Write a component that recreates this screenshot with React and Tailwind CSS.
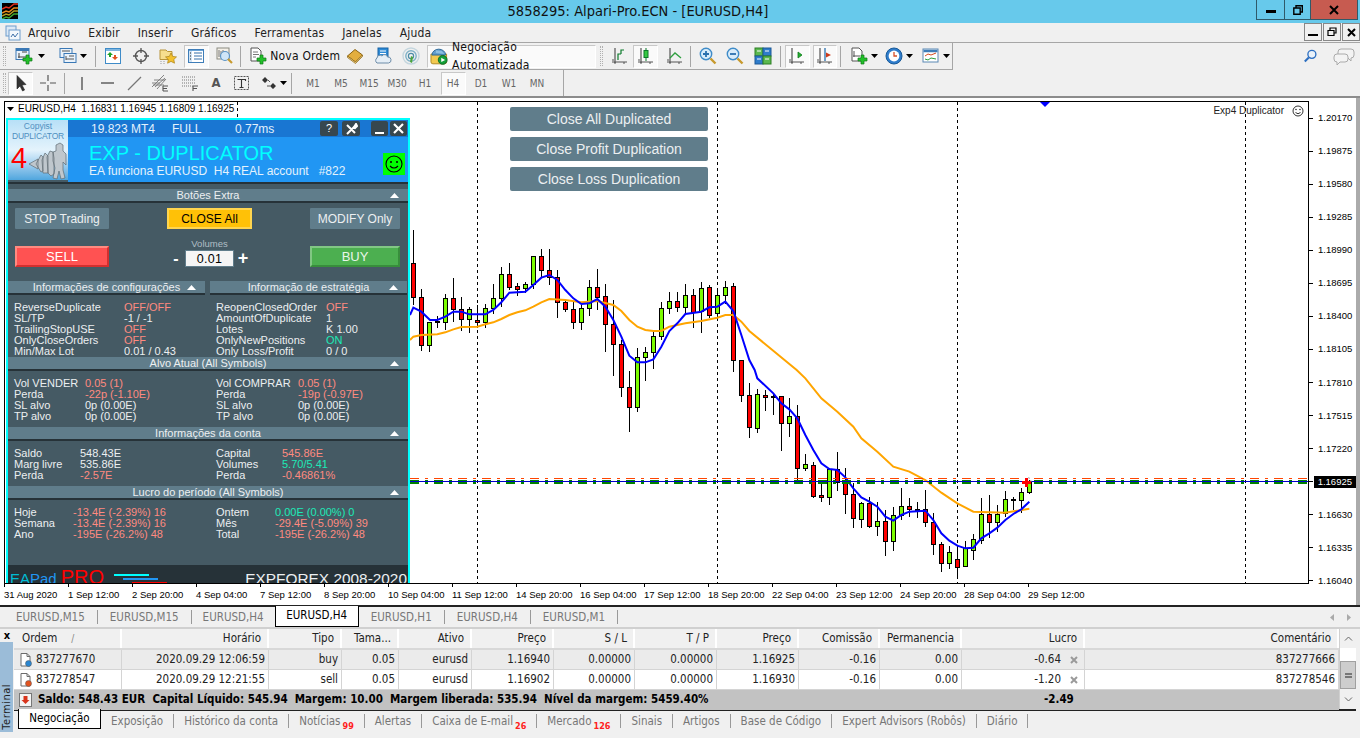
import React from "react";

const candles = [
// i, high, top, bottom, low  (zoom-1 coordinates), g = up
[15,115,217,240,0],[193,217,361,377,0],[291,291,361,380,1],[273,287,292,308,0],[207,220,290,315,1],[160,220,253,290,0],[217,253,283,318,0],[247,253,283,323,1],[240,286,292,310,0],[238,250,292,310,1],[178,220,250,266,1],[127,148,220,246,1],[115,148,185,194,0],[175,184,193,212,0],[172,178,190,205,1],[92,94,178,193,1],[72,94,136,155,0],[72,136,157,180,0],[136,157,232,278,0],[225,232,253,260,0],[232,253,292,311,0],[240,250,292,314,1],[166,187,250,272,1],[132,187,216,256,0],[178,214,298,380,0],[225,298,358,452,0],[345,358,487,515,0],[438,487,547,620,0],[370,397,547,560,1],[366,382,397,467,1],[320,334,382,432,1],[232,250,334,345,1],[202,229,250,266,1],[202,229,247,262,0],[178,211,247,266,1],[193,211,262,308,0],[172,190,259,323,1],[181,187,271,278,0],[190,211,265,280,1],[169,187,211,238,1],[175,184,406,440,0],[406,406,511,532,0],
].map((c) => [225 + c[0] / 3, 225 + c[1] / 3, 225 + c[2] / 3, 225 + c[3] / 3, c[4]]);
const candles2 = [
[40,76,172,203,0],[58,73,175,188,1],[60,76,82,123,0],[68,78,81,135,0],[78,79,160,242,0],[85,139,160,200,1],[105,139,295,340,0],[253,283,295,302,1],[275,286,377,385,0],[330,376,382,396,0],[295,298,382,405,1],[246,298,337,362,0],[295,337,373,432,0],[340,373,445,474,0],[396,400,448,474,1],[380,400,469,474,0],[396,454,469,498,1],[420,454,512,558,0],[412,436,514,543,1],[354,409,436,450,1],[383,409,418,440,0],[397,418,420,445,0],[360,418,457,472,0],[430,457,523,555,0],[517,523,580,605,0],[527,547,580,597,1],[535,568,592,620,0],[512,535,589,590,1],[492,508,541,570,1],[384,433,511,522,1],[376,433,457,503,0],[406,433,457,487,1],[362,388,430,440,1],[381,388,391,420,0],[354,367,391,430,1],[330,337,367,373,1],
].map((c) => [370 + c[0] / 3, 370 + c[1] / 3, 370 + c[2] / 3, 370 + c[3] / 3, c[4]]);
const allCandles = [...candles, ...candles2];

const z7 = (a) => a.map(([x, y]) => `${410 + x / 3},${225 + y / 3}`);
const z8 = (a) => a.map(([x, y]) => `${720 + x / 3},${370 + y / 3}`);
const blue = [...z7([[0,270],[10,248],[34,260],[60,285],[82,285],[106,275],[130,260],[154,260],[178,268],[226,268],[250,255],[274,232],[298,203],[346,200],[370,180],[394,158],[418,150],[442,165],[466,195],[490,220],[514,237],[538,235],[562,222],[586,245],[610,285],[634,335],[658,392],[682,412],[706,412],[730,403],[754,365],[778,318],[802,295],[826,267],[874,260],[898,247],[922,245],[946,230],[970,258],[994,330],[1018,405]]),
...z8([[104,0],[112,25],[160,70],[184,100],[208,118],[232,145],[256,195],[280,240],[304,280],[328,297],[352,300],[376,322],[400,355],[424,382],[448,395],[472,410],[496,440],[520,452],[544,435],[568,425],[616,422],[640,450],[664,490],[688,512],[712,527],[736,535],[760,533],[784,505],[808,490],[832,473],[856,450],[880,432],[904,418],[928,395]])].join(" ");
const orange = [...z7([[0,345],[10,335],[34,330],[82,328],[106,322],[130,313],[154,306],[202,305],[226,298],[250,292],[274,282],[298,270],[322,262],[346,256],[370,245],[394,232],[418,222],[466,225],[514,232],[562,228],[610,240],[634,258],[658,285],[682,305],[706,315],[730,318],[754,318],[778,305],[826,295],[874,288],[922,278],[946,270],[970,270],[994,290],[1018,318]]),
...z8([[230,0],[256,25],[304,85],[352,125],[400,170],[424,205],[472,245],[520,290],[568,305],[616,330],[664,368],[712,400],[760,425],[856,428],[928,416]])].join(" ");

function ChartSvg() {
  return (
    <svg className="absolute left-0 top-0" width="1303" height="481" viewBox="5 102 1303 481">
      {[237, 477, 717, 957, 1245].map((x) => (
        <line key={x} x1={x + 0.5} x2={x + 0.5} y1="102" y2="583" stroke="#000" strokeDasharray="3 3" shapeRendering="crispEdges" />
      ))}
      {allCandles.map((c, i) => {
        const cx = 413 + i * 8;
        const t = Math.round(c[1]), b = Math.round(c[2]);
        return (
          <g key={i} shapeRendering="crispEdges">
            <line x1={cx + 0.5} x2={cx + 0.5} y1={Math.round(c[0])} y2={Math.round(c[3])} stroke="#000" />
            <rect x={cx - 1.5} y={t + 0.5} width="4" height={Math.max(b - t, 1)} fill={c[4] ? "#7CFC00" : "#FF0000"} stroke="#000" />
          </g>
        );
      })}
      <polyline points={orange} fill="none" stroke="#FFA500" strokeWidth="2" />
      <polyline points={blue} fill="none" stroke="#0000FF" strokeWidth="2" />
      <g shapeRendering="crispEdges">
        <line x1="410" x2="1308" y1="478.5" y2="478.5" stroke="#FF4500" strokeDasharray="9 6 3 6" />
        <line x1="410" x2="1308" y1="483.5" y2="483.5" stroke="#008000" strokeDasharray="9 6 3 6" />
        <line x1="410" x2="1308" y1="481" y2="481" stroke="#008000" strokeWidth="3" strokeDasharray="9 6 3 6" />
        <line x1="410" x2="1308" y1="481.5" y2="481.5" stroke="#0000CD" />
      </g>
      <path d="M1025 478h3v3h3v3h-3v3h-3v-3h-3v-3h3z" fill="#FF0000" />
      <path d="M1028 477l2 1-1 1zM1030 480l2 1-1 1z" fill="#888" />
      <path d="M1040 102h10l-5 5z" fill="#0000FF" />
      <circle cx="1298" cy="111" r="5" fill="#fff" stroke="#000" strokeWidth="0.8" />
      <path d="M1295.5 112.5q2.5 2.5 5 0" fill="none" stroke="#000" strokeWidth="0.8" />
      <circle cx="1296" cy="109.5" r="0.7" /><circle cx="1300" cy="109.5" r="0.7" />
    </svg>
  );
}

const Sep = () => <div className="w-px h-[21px] bg-[#a6a6a6]" />;
const Grip = () => <div className="h-[20px] w-[3px] border-x border-dotted border-[#b0b0b0]" />;
const Drop = () => (
  <svg width="7" height="4" viewBox="0 0 7 4"><path d="M0 0h7L3.5 4z" fill="#000" /></svg>
);
const Ax = ({ c = "#333", g }) => (
  <>
    <path d="M4 1v15M1 15h15" stroke="#555" strokeWidth="1.2" fill="none" />
    <path d="M1 13h2M4 15v2M13 15v2" stroke="#555" fill="none" />
    {g}
  </>
);
const I = ({ s = 18, children, v = "0 0 18 18" }) => (
  <svg width={s} height={s} viewBox={v} className="block">{children}</svg>
);
const Plus = ({ x = 9, y = 9 }) => (
  <path transform={`translate(${x} ${y})`} d="M3 0h3v3h3v3H6v3H3V6H0V3h3z" fill="#22C02A" stroke="#107A18" strokeWidth="0.7" />
);
const Ico = {
  newChart: (
    <I><rect x="1" y="1.5" width="13" height="11" fill="#EAF2FA" stroke="#3A78B5" /><path d="M1 3h13" stroke="#3A78B5" strokeWidth="2" /><path d="M4 6v5M3 10h8M7 5h5" stroke="#444" fill="none" /><Plus x="8" y="8" /></I>
  ),
  profiles: (
    <I><rect x="1" y="1.5" width="12" height="9" fill="#EAF2FA" stroke="#3A78B5" /><rect x="5" y="6.5" width="12" height="9" fill="#EAF2FA" stroke="#3A78B5" /><path d="M3 4h8M7 9v4M7 12h8M10 9h5" stroke="#555" fill="none" /></I>
  ),
  market: (
    <I><rect x="1.5" y="1.5" width="15" height="15" fill="#fff" stroke="#3E8BC8" /><path d="M2 3h14" stroke="#7FB6E0" strokeWidth="2" /><path d="M6 5l-3 3h2v2h2V8h2z" fill="#1DA32A" /><path d="M11 13l3-3h-2V8h-2v2H8z" fill="#E2531F" /></I>
  ),
  cross: (
    <I><circle cx="9" cy="9" r="5.5" fill="none" stroke="#555" strokeWidth="1.4" /><path d="M9 1v5M9 12v5M1 9h5M12 9h5" stroke="#555" strokeWidth="1.3" /></I>
  ),
  folder: (
    <I><path d="M1 3h6l1.5 1.5H13v8H1z" fill="#F6DE8E" stroke="#B8953A" /><path d="M12 6l1.7 3.4 3.8.5-2.7 2.6.7 3.7-3.5-1.8-3.4 1.8.7-3.7-2.8-2.6 3.8-.5z" fill="#F3C12F" stroke="#A97F16" strokeWidth="0.7" /><path d="M2 14v3M5 14v3" stroke="#999" strokeDasharray="1 1" /></I>
  ),
  nav: (
    <I><rect x="1.5" y="2.5" width="15" height="13" fill="#fff" stroke="#3E7DB8" /><path d="M2 3.5h14" stroke="#6AA3D6" /><rect x="2" y="4" width="3" height="11" fill="#CFE3F5" /><path d="M7 6h8M7 9h8M7 12h8" stroke="#356FA8" /><path d="M3 6h1M3 9h1M3 12h1" stroke="#222" /></I>
  ),
  tester: (
    <I><rect x="1" y="1" width="12" height="11" fill="#F4F0E8" stroke="#8A8A80" /><path d="M3 3v7M5 4v5M7 3v6" stroke="#777" /><circle cx="9" cy="9" r="4.5" fill="#CFE5F7" stroke="#5B93C4" strokeWidth="1.2" /><path d="M12 12l4 4" stroke="#C79A2E" strokeWidth="2.2" /></I>
  ),
  order: (
    <I><path d="M2 1h7l3 3v10H2z" fill="#fff" stroke="#555" /><path d="M4 5h5M4 7.5h6M4 10h3" stroke="#777" /><Plus x="8" y="8" /></I>
  ),
  book: (
    <I><path d="M1.5 9L9 2.5l7.5 5.5-7 7z" fill="#E3AE3E" stroke="#8B6414" /><path d="M1.5 9v1.5l8 6 7-7V8l-7 7z" fill="#F2D68B" stroke="#8B6414" strokeWidth="0.7" /></I>
  ),
  mail: (
    <I><rect x="4" y="1" width="10" height="11" fill="#2E8BD6" stroke="#1763A5" /><path d="M6 4h6M6 6.5h6M6 9h6" stroke="#fff" /><path d="M3 11a3 3 0 0 1 5-2 3 3 0 0 1 5.5 1 3 3 0 0 1 1 6H3a3 3 0 0 1 0-5z" fill="#E5EEF6" stroke="#6D8CA8" /></I>
  ),
  signal: (
    <I><circle cx="9" cy="9" r="8" fill="none" stroke="#C4D6DE" strokeWidth="1.4" /><circle cx="9" cy="9" r="5.2" fill="none" stroke="#7DB0C6" strokeWidth="1.4" /><circle cx="9" cy="9" r="2.6" fill="none" stroke="#4B8CA8" strokeWidth="1.2" /><path d="M9 9l2 1-1 6-2-1z" fill="#4BA43C" /></I>
  ),
  auto: (
    <I><path d="M1 7h16v8a2 2 0 0 1-2 2H3a2 2 0 0 1-2-2z" fill="#F2C94F" stroke="#B08B22" /><path d="M2 8a7 6 0 0 1 14 0z" fill="#5F9CCB" stroke="#2D6998" /><path d="M6 3l6 1 3 3-9-1z" fill="#8CBEE1" /><circle cx="13" cy="13" r="4.5" fill="#14A03A" stroke="#0A6B25" /><path d="M11.5 10.8l4 2.2-4 2.2z" fill="#fff" /></I>
  ),
  bar: (
    <I s={18}><Ax g={<path d="M7 13V7h3M10 7V3h3" stroke="#0a7a2a" strokeWidth="1.2" fill="none" />} /></I>
  ),
  candle: (
    <I s={18}><Ax g={<><path d="M9 1v13" stroke="#0a7a2a" /><rect x="7" y="3.5" width="4" height="7" fill="#34C940" stroke="#0a7a2a" /></>} /></I>
  ),
  line: (
    <I s={18}><Ax g={<path d="M4 11l5-5 6 5" stroke="#2E9E3F" strokeWidth="1.3" fill="none" />} /></I>
  ),
  zoomIn: (
    <I><circle cx="7" cy="7" r="5.7" fill="#D8ECFA" stroke="#3E8BC8" strokeWidth="1.4" /><path d="M4 7h6M7 4v6" stroke="#2A70AE" strokeWidth="1.8" /><path d="M11.5 11.5l5 5" stroke="#C79A2E" strokeWidth="2.4" /></I>
  ),
  zoomOut: (
    <I><circle cx="7" cy="7" r="5.7" fill="#D8ECFA" stroke="#3E8BC8" strokeWidth="1.4" /><path d="M4 7h6" stroke="#2A70AE" strokeWidth="1.8" /><path d="M11.5 11.5l5 5" stroke="#C79A2E" strokeWidth="2.4" /></I>
  ),
  tile: (
    <I><rect x="1" y="1" width="8" height="8" fill="#5BB84E" stroke="#2D7F24" /><rect x="9" y="1" width="8" height="8" fill="#2F7CCB" stroke="#1C5995" /><rect x="1" y="9" width="8" height="8" fill="#2F7CCB" stroke="#1C5995" /><rect x="9" y="9" width="8" height="8" fill="#5BB84E" stroke="#2D7F24" /><path d="M3 4h4M11 4h4M3 12h4M11 12h4" stroke="#fff" /></I>
  ),
  scroll: (
    <I><Ax g={<path d="M10 5v6l4-3z" fill="#22B030" stroke="#0f7a1c" strokeWidth="0.8" />} /></I>
  ),
  shift: (
    <I><Ax g={<><path d="M9 1v13" stroke="#2A70AE" strokeWidth="1.3" /><path d="M15 8l-5-2.5v5z" fill="#CC3A1A" /></>} /></I>
  ),
  tmpl: (
    <I><path d="M2 1h7l3 3v10H2z" fill="#fff" stroke="#555" /><path d="M4 4v6M3 9h7" stroke="#555" fill="none" /><Plus x="8" y="8" /></I>
  ),
  clock: (
    <I><circle cx="9" cy="9" r="8" fill="#2F7CCB" stroke="#175A99" /><circle cx="9" cy="9" r="5.4" fill="#fff" /><path d="M9 5v4h3" stroke="#D8502A" strokeWidth="1.3" fill="none" /></I>
  ),
  tpl2: (
    <I><rect x="1" y="2" width="15" height="13" fill="#fff" stroke="#5A88B3" /><path d="M1.5 4h14" stroke="#3E7DB8" strokeWidth="2.5" /><path d="M3 9l3-2 3 1 5-2" stroke="#D34A1D" fill="none" /><path d="M3 12l3 1 3-2 5 1" stroke="#2B9E3A" fill="none" /></I>
  ),
  arrow: (
    <I><path d="M5 1.5l9 9-4 .5 2.6 5-2 1-2.6-5-3 3z" fill="#333" stroke="#222" strokeWidth="0.6" /></I>
  ),
  plusCross: (
    <I><path d="M9 1v6M9 11v6M1 9h6M11 9h6" stroke="#555" strokeWidth="1.2" /></I>
  ),
  vline: (
    <I><path d="M9 3v13" stroke="#555" strokeWidth="1.4" /></I>
  ),
  hline: (
    <I><path d="M2 9h13" stroke="#555" strokeWidth="1.4" /></I>
  ),
  tline: (
    <I><path d="M3 16L16 3" stroke="#777" strokeWidth="1.3" /></I>
  ),
  fibE: (
    <I><path d="M1 13L13 1M1 9l8 0M4 13l10-9M6 15L15 5M3 6h11M2 11h11" stroke="#777" strokeWidth="0.9" /><path d="M12 12h5M12 12v5M12 14.5h4M12 17h5" stroke="#555" strokeWidth="1.1" /></I>
  ),
  fibF: (
    <I><path d="M1 3h13M1 6h13M1 9h13M1 12h11" stroke="#777" strokeDasharray="1 1" /><path d="M12 12h5M12 12v5M12 14.5h4" stroke="#555" strokeWidth="1.1" /></I>
  ),
  textT: (
    <I><rect x="1.5" y="2.5" width="14" height="13" fill="none" stroke="#555" strokeDasharray="2 1" /><path d="M4.5 5.5h8v1.5M8.5 5.5v8M6.5 13.5h4" stroke="#333" strokeWidth="1.1" fill="none" /></I>
  ),
  shapes: (
    <I><path d="M5 3l3 3-3 3-3-3zM13 9l3 3-3 3-3-3z" fill="#333" /><path d="M8 6l2 2M7 12h3" stroke="#555" /></I>
  ),
  search: (
    <I s={16}><circle cx="10" cy="6" r="4.5" fill="#EAF2FA" stroke="#2D6FC1" strokeWidth="1.5" /><path d="M6.5 9.5L2 14" stroke="#2D6FC1" strokeWidth="2.2" /></I>
  ),
  chat: (
    <I s={22} v="0 0 22 18"><path d="M8 1h10a3 3 0 0 1 3 3v3a3 3 0 0 1-3 3v3l-3-3H8a3 3 0 0 1-3-3V4a3 3 0 0 1 3-3z" fill="#F3F3F3" stroke="#AAA" /><path d="M4 6h8a3 3 0 0 1 3 3v2a3 3 0 0 1-3 3H7l-3 3v-3a3 3 0 0 1-3-3V9a3 3 0 0 1 3-3z" fill="#F3F3F3" stroke="#AAA" /></I>
  ),
  doc: (c) => (
    <I s={14} v="0 0 14 14"><path d="M2 0.5h6l3 3V13H2z" fill="#fff" stroke="#6B6B6B" /><path d="M8 .5v3h3" fill="none" stroke="#6B6B6B" /><circle cx="9.5" cy="10.5" r="3" fill={c} stroke="#555" strokeWidth="0.5" /></I>
  ),
};

const On = ({ w, children }) => (
  <div className={`${w} h-[23px] flex items-center justify-center bg-[#fafafa] border border-[#c8c8c8] border-r-[#fff] border-b-[#fff]`}>{children}</div>
);

function Toolbar1() {
  return (
    <div className="flex items-center w-[953px] h-[27px] border-r border-b border-[#a6a6a6] text-[12px] text-[#111]">
      <div className="w-[3px]" /><Grip /><div className="w-[6px]" />
      <div className="w-[24px] flex justify-center">{Ico.newChart}</div><div className="w-[13px] flex justify-center"><Drop /></div>
      <div className="w-[12px] flex justify-center ml-[-1px]" />
      <div className="w-[18px]">{Ico.profiles}</div><div className="w-[14px] flex justify-center"><Drop /></div>
      <div className="w-[4px]" /><Sep /><div className="w-[8px]" />
      <div className="w-[18px]">{Ico.market}</div><div className="w-[11px]" />
      <div className="w-[18px]">{Ico.cross}</div><div className="w-[9px]" />
      <div className="w-[18px]">{Ico.folder}</div><div className="w-[7px]" />
      <On w="w-[25px]">{Ico.nav}</On><div className="w-[7px]" />
      <div className="w-[18px]">{Ico.tester}</div><div className="w-[7px]" />
      <Sep /><div className="w-[8px]" />
      <div className="w-[18px]">{Ico.order}</div>
      <div className="w-[76px] pl-[3px] tracking-[0.2px]">Nova Ordem</div><div className="w-[4px]" />
      <div className="w-[18px]">{Ico.book}</div><div className="w-[10px]" />
      <div className="w-[18px]">{Ico.mail}</div><div className="w-[10px]" />
      <div className="w-[18px]">{Ico.signal}</div><div className="w-[8px]" />
      <div className="w-[171px] h-[23px] flex items-center bg-[#fafafa] border border-[#c8c8c8] border-r-[#fff] border-b-[#fff] pl-[2px] gap-[4px] tracking-[0.2px]">{Ico.auto}<span>Negociação Automatizada</span></div>
      <div className="w-[4px]" /><Grip /><div className="w-[9px]" />
      <div className="w-[18px]">{Ico.bar}</div><div className="w-[4px]" />
      <On w="w-[25px]">{Ico.candle}</On><div className="w-[8px]" />
      <div className="w-[18px]">{Ico.line}</div><div className="w-[6px]" />
      <Sep /><div className="w-[8px]" />
      <div className="w-[18px]">{Ico.zoomIn}</div><div className="w-[10px]" />
      <div className="w-[18px]">{Ico.zoomOut}</div><div className="w-[10px]" />
      <div className="w-[18px]">{Ico.tile}</div><div className="w-[8px]" />
      <Sep /><div className="w-[4px]" />
      <On w="w-[25px]">{Ico.scroll}</On><div className="w-[3px]" />
      <On w="w-[25px]">{Ico.shift}</On><div className="w-[3px]" />
      <Sep /><div className="w-[9px]" />
      <div className="w-[18px]">{Ico.tmpl}</div><div className="w-[13px] flex justify-center"><Drop /></div>
      <div className="w-[4px]" />
      <div className="w-[18px]">{Ico.clock}</div><div className="w-[13px] flex justify-center"><Drop /></div>
      <div className="w-[7px]" />
      <div className="w-[18px]">{Ico.tpl2}</div><div className="w-[12px] flex justify-center"><Drop /></div>
    </div>
  );
}

const Tf = ({ t, a }) =>
  a ? (
    <div className="w-[25px] mx-[1.5px] h-[23px] flex items-center justify-center bg-[#fafafa] border border-[#c8c8c8] border-r-[#fff] border-b-[#fff]">{t}</div>
  ) : (
    <div className="w-[28px] text-center">{t}</div>
  );

function Toolbar2() {
  return (
    <div className="flex items-center w-[564px] h-[26px] border-r border-[#a6a6a6]">
      <div className="w-[3px]" /><Grip /><div className="w-[2px]" />
      <On w="w-[25px]">{Ico.arrow}</On><div className="w-[6px]" />
      <div className="w-[18px]">{Ico.plusCross}</div><div className="w-[7px]" />
      <Sep /><div className="w-[8px]" />
      <div className="w-[18px]">{Ico.vline}</div><div className="w-[8px]" />
      <div className="w-[18px]">{Ico.hline}</div><div className="w-[8px]" />
      <div className="w-[18px]">{Ico.tline}</div><div className="w-[8px]" />
      <div className="w-[18px]">{Ico.fibE}</div><div className="w-[12px]" />
      <div className="w-[18px]">{Ico.fibF}</div><div className="w-[8px]" />
      <div className="w-[18px] text-center text-[13px] font-bold text-[#555]">A</div><div className="w-[8px]" />
      <div className="w-[18px]">{Ico.textT}</div><div className="w-[9px]" />
      <div className="w-[18px]">{Ico.shapes}</div><div className="w-[11px] flex justify-center"><Drop /></div>
      <div className="w-[2px]" /><Sep /><div className="w-[7px]" />
      <div className="flex items-center text-[10px] text-[#666]">
        <Tf t="M1" /><Tf t="M5" /><Tf t="M15" /><Tf t="M30" /><Tf t="H1" /><Tf t="H4" a /><Tf t="D1" /><Tf t="W1" /><Tf t="MN" />
      </div>
    </div>
  );
}

const Sec = ({ t, w = "" }) => (
  <div className={`${w} h-[14px] bg-[#607D8B] border-b-2 border-[#263238] grid grid-cols-[1fr_auto_1fr] items-center text-[#ECEFF1] text-[11px] leading-[12px]`}>
    <div />
    <div>{t}</div>
    <svg className="justify-self-end mr-[9px]" width="9" height="5" viewBox="0 0 9 5"><path d="M0 5L4.5 0 9 5z" fill="#fff" /></svg>
  </div>
);

const Lbl = ({ children, c = "text-[#ECEFF1]" }) => <div className={`${c} h-[11px] leading-[11px] whitespace-nowrap`}>{children}</div>;
const R = "text-[#FF8A80]";
const G = "text-[#1DE9B6]";

function Rows({ cols, items }) {
  return (
    <div className={`${cols} grid text-[11px] pl-[6px]`}>
      {items.map((r, i) => (
        <React.Fragment key={i}>
          <Lbl>{r[0]}</Lbl>
          <Lbl c={r[2] || "text-[#ECEFF1]"}>{r[1]}</Lbl>
          <Lbl>{r[3]}</Lbl>
          <Lbl c={r[5] || "text-[#ECEFF1]"}>{r[4]}</Lbl>
        </React.Fragment>
      ))}
    </div>
  );
}

function Logo() {
  return (
    <div className="relative w-[60px] h-[60px] shrink-0 overflow-hidden bg-gradient-to-b from-[#B8E0F7] via-[#E4F3FC] to-[#4FA6DE] text-center leading-[10px] text-[8.5px] text-[#4F8FC0]">
      <div className="pt-[1px]">Copyist</div>
      <div className="tracking-[-0.2px]">DUPLICATOR</div>
      <div className="absolute left-[3px] top-[23px] text-[#FF0000] text-[29px] leading-[30px]">4</div>
      <svg className="absolute left-[20px] top-[20px]" width="40" height="40" viewBox="0 0 40 40">
        <path d="M1 24l9-5v10zM8 24l5-9 2 2v14l-2 1zM14 20l3-7 3 3v17h-5zM19 17l3-6 3 1 1 6v16l-3 2-3-3zM25 12l3-1v-6l4-2 3 2v6l3 3v11l-3-3v8l2 8-4 1-2-8-2 8-4-1 2-10-2-7z" fill="#BFC7CD" stroke="#5F6B73" strokeWidth="0.7" />
      </svg>
    </div>
  );
}

function Btn({ w, c, t }) {
  return <div className={`${w} ${c} h-[21px] flex items-center justify-center text-[12px]`}>{t}</div>;
}

function Panel() {
  return (
    <div className="absolute left-px top-[16px] w-[404px] h-[465px] overflow-hidden border-x-2 border-t-2 border-[#00FFFF] bg-[#455A64] font-['Liberation_Sans',sans-serif]">
      <div className="flex h-[62px]">
        <Logo />
        <div className="flex-1 flex flex-col">
          <div className="h-[17px] bg-[#1976D2] flex items-center text-[12px] text-[#E3F2FD]">
            <div className="w-[23px]" />
            <div className="w-[81px]">19.823 MT4</div>
            <div className="w-[63px]">FULL</div>
            <div className="w-[85px]">0.77ms</div>
            <div className="w-[18px] h-[15px] bg-[#37474F] text-white text-center leading-[15px] text-[11px] rounded-[2px]">?</div>
            <div className="w-[4px]" />
            <div className="w-[18px] h-[15px] bg-[#37474F] flex items-center justify-center rounded-[2px]">
              <svg width="13" height="12" viewBox="0 0 13 12"><path d="M2 11l7-7M9 4l2-3 1 2-2 2zM2 2l8 8" stroke="#fff" strokeWidth="2" fill="none" /></svg>
            </div>
            <div className="w-[11px]" />
            <div className="w-[17px] h-[15px] bg-[#37474F] flex items-end justify-center pb-[2px] rounded-[2px]"><div className="w-[9px] h-[2px] bg-white" /></div>
            <div className="w-[2px]" />
            <div className="w-[17px] h-[15px] bg-[#37474F] flex items-center justify-center rounded-[2px]">
              <svg width="11" height="11" viewBox="0 0 11 11"><path d="M1 1l9 9M10 1l-9 9" stroke="#fff" strokeWidth="2.2" /></svg>
            </div>
          </div>
          <div className="h-[45px] bg-[#2196F3] flex pl-[21px]">
            <div className="flex-1">
              <div className="text-[#00FFFF] text-[20px] leading-[22px] pt-[5px] h-[26px]">EXP - DUPLICATOR</div>
              <div className="text-[#E3F2FD] text-[12px] leading-[14px] pt-[1px] whitespace-pre">EA funciona EURUSD  H4 REAL account   #822</div>
            </div>
            <div className="w-[22px] h-[22px] mt-[16px] mr-[3px] bg-[#00FF00] flex items-center justify-center">
              <svg width="18" height="18" viewBox="0 0 18 18"><circle cx="9" cy="9" r="8" fill="none" stroke="#000" strokeWidth="1.1" /><circle cx="6" cy="7" r="1" /><circle cx="12" cy="7" r="1" /><path d="M5 11q4 4 8 0" fill="none" stroke="#000" strokeWidth="1.1" /></svg>
            </div>
          </div>
        </div>
      </div>
      <div className="h-[2px] bg-[#263238]" />
      <div className="pt-[5px]">
        <Sec t="Botões Extra" />
        <div className="flex justify-between pl-[7px] pr-[8px] mt-[5px]">
          <Btn w="w-[94px]" c="bg-[#607D8B] text-[#ECEFF1] rounded-[1px]" t="STOP Trading" />
          <Btn w="w-[85px] border-2 border-[#FFD54F] bg-[#FFC107] text-black box-border" c="" t="CLOSE All" />
          <Btn w="w-[90px]" c="bg-[#607D8B] text-[#ECEFF1] rounded-[1px]" t="MODIFY Only" />
        </div>
        <div className="flex justify-between items-end pl-[7px] pr-[8px] mt-[10px] h-[28px]">
          <div className="w-[94px] h-[21px] flex items-center justify-center bg-[#FF5252] border-2 border-[#FF8A80] border-r-[#D32F2F] border-b-[#D32F2F] text-white text-[13px]">SELL</div>
          <div className="flex flex-col items-center">
            <div className="text-[#B0BEC5] text-[9.5px] leading-[10px] h-[11px]">Volumes</div>
            <div className="flex items-center h-[17px]">
              <div className="w-[18px] text-white font-bold text-[16px] text-center leading-[17px]">-</div>
              <div className="w-[49px] h-[17px] bg-[#F5F5F5] border border-[#607D8B] text-black text-center text-[12.5px] leading-[16px] tracking-[0.3px]">0.01</div>
              <div className="w-[18px] text-white font-bold text-[18px] text-center leading-[17px]">+</div>
            </div>
          </div>
          <div className="w-[90px] h-[21px] flex items-center justify-center bg-[#4CAF50] border-2 border-[#81C784] border-r-[#388E3C] border-b-[#388E3C] text-[#E8F5E9] text-[13px]">BUY</div>
        </div>
        <div className="flex justify-between pr-[1px] mt-[14px]">
          <Sec w="w-[197px]" t="Informações de configurações" />
          <Sec w="w-[197px]" t="Informação de estratégia" />
        </div>
        <div className="mt-[7px]" />
        <Rows cols="grid-cols-[110px_92px_110px_1fr]" items={[
          ["ReverseDuplicate", "OFF/OFF", R, "ReopenClosedOrder", "OFF", R],
          ["SL/TP", "-1 / -1", "", "AmountOfDuplicate", "1"],
          ["TrailingStopUSE", "OFF", R, "Lotes", "K 1.00"],
          ["OnlyCloseOrders", "OFF", R, "OnlyNewPositions", "ON", G],
          ["Min/Max Lot", "0.01 / 0.43", "", "Only Loss/Profit", "0 / 0"],
        ]} />
        <Sec t="Alvo Atual (All Symbols)" />
        <div className="mt-[7px]" />
        <Rows cols="grid-cols-[71px_131px_82px_1fr]" items={[
          ["Vol VENDER", "0.05 (1)", R, "Vol COMPRAR", "0.05 (1)", R],
          ["Perda", "-22p (-1.10E)", R, "Perda", "-19p (-0.97E)", R],
          ["SL alvo", "0p (0.00E)", "", "SL alvo", "0p (0.00E)"],
          ["TP alvo", "0p (0.00E)", "", "TP alvo", "0p (0.00E)"],
        ]} />
        <div className="mt-[5px]" />
        <Sec t="Informações da conta" />
        <div className="mt-[7px]" />
        <Rows cols="grid-cols-[66px_136px_66px_1fr]" items={[
          ["Saldo", "548.43E", "", "Capital", "545.86E", R],
          ["Marg livre", "535.86E", "", "Volumes", "5.70/5.41", G],
          ["Perda", "-2.57E", R, "Perda", "-0.46861%", R],
        ]} />
        <div className="mt-[5px]" />
        <Sec t="Lucro do período (All Symbols)" />
        <div className="mt-[7px]" />
        <Rows cols="grid-cols-[59px_143px_59px_1fr]" items={[
          ["Hoje", "-13.4E (-2.39%) 16", R, "Ontem", "0.00E (0.00%) 0", G],
          ["Semana", "-13.4E (-2.39%) 16", R, "Mês", "-29.4E (-5.09%) 39", R],
          ["Ano", "-195E (-26.2%) 48", R, "Total", "-195E (-26.2%) 48", R],
        ]} />
        <div className="mt-[25px] h-[22px] bg-[#263238] flex items-start relative">
          <div className="pl-[2px] pt-[6px] text-[15px] leading-[16px] whitespace-nowrap">
            <span className="text-[#00BCD4]">EA</span><span className="text-[#2196F3]">Pad</span>
          </div>
          <div className="text-[#FF0000] text-[20px] leading-[20px] pt-[2px] pl-[4px] w-[50px]">PRO</div>
          <div className="pt-[9px] pl-[7px] w-[54px]">
            <div className="w-[35px] h-[2px] bg-[#00FFFF]" />
            <div className="w-[35px] h-[2px] bg-[#2196F3] ml-[9px] mt-[2px]" />
            <div className="w-[35px] h-[2px] bg-[#FF0000] ml-[18px] mt-[2px]" />
          </div>
          <div className="ml-auto pt-[6px] pr-[1px] text-[#ECEFF1] text-[15.4px] leading-[16px] whitespace-nowrap">EXPFOREX 2008-2020</div>
        </div>
      </div>
    </div>
  );
}

const prices = ["1.20170","1.19875","1.19580","1.19285","1.18990","1.18695","1.18400","1.18105","1.17810","1.17515","1.17220","1.16925","1.16630","1.16335","1.16040"];
const times = ["31 Aug 2020","1 Sep 12:00","2 Sep 20:00","4 Sep 04:00","7 Sep 12:00","8 Sep 20:00","10 Sep 04:00","11 Sep 12:00","14 Sep 20:00","16 Sep 04:00","17 Sep 12:00","18 Sep 20:00","22 Sep 04:00","23 Sep 12:00","24 Sep 20:00","28 Sep 04:00","29 Sep 12:00"];

function Chart() {
  return (
    <div className="flex h-[507px] bg-white text-[9.5px] text-black font-['Liberation_Sans',sans-serif]">
      <div className="w-[1309px] pl-[4px] pt-[3px]">
        <div className="relative w-[1305px] h-[483px] border border-black overflow-hidden">
          <ChartSvg />
          <div className="absolute left-[2px] top-[1px] flex items-center gap-[4px] text-[10px] leading-[12px] whitespace-pre">
            <svg width="7" height="4" viewBox="0 0 7 4"><path d="M0 0h7L3.5 4z" /></svg>
            <span>EURUSD,H4  1.16831 1.16945 1.16809 1.16925</span>
          </div>
          <div className="absolute right-[24px] top-[3px] text-[10px] leading-[12px] text-[#222]">Exp4 Duplicator</div>
          <div className="absolute left-[505px] top-[5px] w-[198px] flex flex-col gap-[6px] text-[14px] text-[#ECEFF1]">
            {["Close All Duplicated", "Close Profit Duplication", "Close Loss Duplication"].map((t) => (
              <div key={t} className="h-[24px] bg-[#607D8B] rounded-[2px] flex items-center justify-center">{t}</div>
            ))}
          </div>
          <Panel />
        </div>
        <div className="flex">
          {times.map((t) => (
            <div key={t} className="w-[64px] shrink-0 whitespace-nowrap">
              <div className="w-px h-[3px] bg-black" />
              <div className="leading-[12px] mt-[2px]">{t}</div>
            </div>
          ))}
        </div>
      </div>
      <div className="w-[51px] border-r-[4px] border-[#ABABAB] pt-[14px]">
        <div className="h-[475px] flex flex-col justify-between">
          {prices.map((p) => (
            <div key={p} className="h-[12px] flex items-center">
              <div className="w-[4px] h-px bg-black" />
              {p === "1.16925" ? (
                <div className="ml-[1px] bg-black text-white pl-[4px] pr-[4px] leading-[12px]">{p}</div>
              ) : (
                <div className="ml-[1px] pl-[4px] leading-[12px]">{p}</div>
              )}
            </div>
          ))}
        </div>
      </div>
    </div>
  );
}

const TopTab = ({ t }) => <div className="px-[12px] border-r border-[#999] h-[14px] leading-[14px]">{t}</div>;

function ChartTabs() {
  return (
    <div className="h-[22px] border-t-2 border-[#222] bg-[#F0F0F0] flex items-center text-[11.5px] text-[#777] font-['DejaVu_Sans_Condensed','Liberation_Sans',sans-serif]">
      <div className="w-[4px]" />
      <TopTab t="EURUSD,M15" /><TopTab t="EURUSD,M15" />
      <div className="px-[11px] h-[14px] leading-[14px]">EURUSD,H4</div>
      <div className="self-start h-[21px] w-[84px] -mt-[1px] bg-white border-x border-b border-black text-black flex items-center justify-center">EURUSD,H4</div>
      <TopTab t="EURUSD,H1" /><TopTab t="EURUSD,H4" /><TopTab t="EURUSD,M1" />
      <div className="ml-auto mr-[9px] flex gap-[13px]">
        <svg width="4" height="7" viewBox="0 0 4 7"><path d="M4 0v7L0 3.5z" fill="#aaa" /></svg>
        <svg width="4" height="7" viewBox="0 0 4 7"><path d="M0 0v7l4-3.5z" fill="#aaa" /></svg>
      </div>
    </div>
  );
}

const cols = "grid grid-cols-[108px_147px_73px_57px_73px_82px_81px_82px_82px_81px_82px_123px_254px]";
const heads = ["Ordem", "Horário", "Tipo", "Tama...", "Ativo", "Preço", "S / L", "T / P", "Preço", "Comissão", "Permanencia", "Lucro", "Comentário"];

function Terminal() {
  const rows = [
    ["837277670", "2020.09.29 12:06:59", "buy", "0.05", "eurusd", "1.16940", "0.00000", "0.00000", "1.16925", "-0.16", "0.00", "-0.64", "837277666"],
    ["837278547", "2020.09.29 12:21:55", "sell", "0.05", "eurusd", "1.16902", "0.00000", "0.00000", "1.16930", "-0.16", "0.00", "-1.20", "837278546"],
  ];
  const tabs = [["Exposição"], ["Histórico da conta"], ["Notícias", "99"], ["Alertas"], ["Caixa de E-mail", "26"], ["Mercado", "126"], ["Sinais"], ["Artigos"], ["Base de Código"], ["Expert Advisors (Robôs)"], ["Diário"]];
  return (
    <div className="flex h-[109px] bg-[#F0F0F0] border-t-2 border-[#D0D0D0] text-[11.5px] text-[#222] font-['DejaVu_Sans_Condensed','Liberation_Sans',sans-serif]">
      <div className="w-[14px] flex flex-col">
        <div className="h-[13px] text-center text-[11px] font-bold leading-[13px] text-black">x</div>
        <div className="w-[13px] h-[90px] bg-[#9BBCD8] flex items-end justify-center pb-[2px]">
          <div className="[writing-mode:vertical-rl] rotate-180 leading-[12px] text-[11px] tracking-[0.5px] text-[#222]">Terminal</div>
        </div>
      </div>
      <div className="flex-1 min-w-0">
        <div className="flex h-[80px]">
          <div className="w-[1325px]">
            <div className={`${cols} h-[21px] bg-[#F0F0F0] border-b-2 border-[#D8D8D8]`}>
              {heads.map((h, i) => (
                <div key={i} className={`${i === 0 ? "pl-[8px] text-left" : "pr-[6px] text-right"} border-r-2 border-white leading-[19px] whitespace-nowrap overflow-hidden`}>
                  {h}
                  {i === 0 && <span className="ml-[14px] text-[#888] text-[10px]">/</span>}
                </div>
              ))}
            </div>
            {rows.map((r, ri) => (
              <div key={ri} className={`${cols} h-[20px] ${ri === 0 ? "bg-[#EBEBEB]" : "bg-white"} border-b border-[#D4D4D4]`}>
                {r.map((c, i) => (
                  <div key={i} className={`${i === 0 ? "pl-[5px] flex items-center gap-[3px]" : "pr-[3px] text-right"} border-r border-[#D4D4D4] leading-[19px] whitespace-nowrap`}>
                    {i === 0 && Ico.doc(ri === 0 ? "#2A86D1" : "#E2531F")}
                    {i === 11 ? (
                      <span className="inline-flex items-center pr-[3px]">
                        {c}
                        <svg className="ml-[9px]" width="8" height="8" viewBox="0 0 8 8"><path d="M1 1l6 6M7 1l-6 6" stroke="#9A9A9A" strokeWidth="2" /></svg>
                      </span>
                    ) : c}
                  </div>
                ))}
              </div>
            ))}
            <div className="h-[20px] bg-[#C2C2C2] flex items-center font-bold text-black">
              <svg className="ml-[5px]" width="13" height="14" viewBox="0 0 13 14"><rect x="0.5" y="0.5" width="12" height="13" fill="#F4F4F4" stroke="#777" /><path d="M4.5 3h4v4h2l-4 4-4-4h2z" fill="#D8341C" /></svg>
              <div className="ml-[6px] whitespace-pre w-[1006px]">Saldo: 548.43 EUR  Capital Líquido: 545.94  Margem: 10.00  Margem liberada: 535.94  Nível da margem: 5459.40%</div>
              <div>-2.49</div>
            </div>
          </div>
          <div className="w-[17px] flex flex-col border-l border-[#D0D0D0] bg-white items-stretch text-[#666]">
            <div className="h-[19px] bg-[#F0F0F0] flex items-center justify-center">
              <svg width="9" height="5" viewBox="0 0 9 5"><path d="M1 4.5l3.5-3.5L8 4.5" fill="none" stroke="#666" /></svg>
            </div>
            <div className="h-[13px]" />
            <div className="h-[28px] bg-[#CDCDCD] border border-[#A0A0A0] flex items-center justify-center">
              <div className="w-[7px] h-[5px] border-y-2 border-[#777]" />
            </div>
            <div className="h-[1px] flex-1 bg-[#F0F0F0] flex items-center justify-center">
              <svg width="9" height="5" viewBox="0 0 9 5"><path d="M1 .5l3.5 3.5L8 .5" fill="none" stroke="#666" /></svg>
            </div>
          </div>
        </div>
        <div className="flex items-center h-[22px] border-t-2 border-[#222] pl-[4px] text-[#777]">
          <div className="self-start w-[83px] h-[20px] -mt-[2px] bg-white border-x border-b border-black text-black flex items-center justify-center">Negociação</div>
          {tabs.map(([t, n]) => (
            <div key={t} className="px-[10px] h-[14px] leading-[14px] border-r border-[#999] whitespace-nowrap flex">
              <span>{t}</span>
              {n && <span className="text-[#FF2020] text-[9px] font-bold leading-[9px] mt-[8px] ml-[2px]">{n}</span>}
            </div>
          ))}
        </div>
      </div>
      <div className="w-[4px]" />
    </div>
  );
}

export default function App() {
  return (
    <div className="w-[1360px] h-[738px] overflow-hidden bg-[#F0F0F0] flex flex-col font-['DejaVu_Sans_Condensed','Liberation_Sans',sans-serif] text-black">
      <div className="h-[23px] bg-[#67C9EB] flex items-start">
        <svg className="ml-[2px] mt-[3px]" width="16" height="16" viewBox="0 0 16 16">
          <rect width="16" height="16" fill="#000" />
          <path d="M0 6l4-2 3 1 5-4 4 0" stroke="#E0301E" strokeWidth="1.5" fill="none" />
          <path d="M0 10l4-2 3 1 5-4 4 0" stroke="#E88A1C" strokeWidth="1.5" fill="none" />
          <path d="M0 13l4-2 3 1 5-4 4 0" stroke="#B5A020" strokeWidth="1.5" fill="none" />
          <path d="M0 16l4-2 3 1 5-4 4 0" stroke="#3DA82F" strokeWidth="1.5" fill="none" />
        </svg>
        <div className="flex-1 text-center pl-[2px] text-[14.5px] leading-[22px] text-[#111]">5858295: Alpari-Pro.ECN - [EURUSD,H4]</div>
        <div className="flex h-[20px] mr-[2px] border-b border-x border-[#2F5A6A]">
          <div className="w-[28px] flex items-center justify-center border-r border-[#2F5A6A]"><div className="w-[10px] h-[3px] bg-black mt-[3px]" /></div>
          <div className="w-[26px] flex items-center justify-center border-r border-[#2F5A6A]">
            <svg width="10" height="10" viewBox="0 0 10 10"><path d="M3 2.5V.7h6.3V7H7.5M.8 3h6.4v6.3H.8z" fill="none" stroke="#000" strokeWidth="1.4" /></svg>
          </div>
          <div className="w-[46px] flex items-center justify-center bg-[#C75B50]">
            <svg width="10" height="10" viewBox="0 0 10 10"><path d="M1 1l8 8M9 1L1 9" stroke="#000" strokeWidth="2" /></svg>
          </div>
        </div>
      </div>
      <div className="h-[20px] flex items-center border-b border-[#A6A6A6] text-[12px] text-[#222]">
        <svg className="ml-[5px]" width="16" height="16" viewBox="0 0 16 16"><rect x="1" y="1" width="10" height="10" fill="#DCE9F6" stroke="#6D9CCB" /><rect x="4" y="5" width="11" height="10" fill="#F2F7FC" stroke="#6D9CCB" /><path d="M6 12l2-3 2 3 3-4" stroke="#3D6FA8" fill="none" /></svg>
        <div className="ml-[7px] flex gap-[18px] tracking-[0.15px]">
          {["Arquivo", "Exibir", "Inserir", "Gráficos", "Ferramentas", "Janelas", "Ajuda"].map((m) => <span key={m}>{m}</span>)}
        </div>
        <div className="ml-auto flex gap-px mb-[1px]">
          {[
            <div className="w-[10px] h-[2px] bg-black mt-[5px]" />,
            <svg width="10" height="10" viewBox="0 0 10 10"><path d="M3 3V1h6v5H7M1 3.5h6v5H1z" fill="none" stroke="#000" strokeWidth="1.2" /></svg>,
            <svg width="9" height="9" viewBox="0 0 9 9"><path d="M1 1l7 7M8 1L1 8" stroke="#000" strokeWidth="2" /></svg>,
          ].map((c, i) => (
            <div key={i} className="w-[18px] h-[18px] border border-[#888] flex items-center justify-center">{c}</div>
          ))}
        </div>
      </div>
      <div className="flex items-center">
        <Toolbar1 />
        <div className="ml-auto flex items-center gap-[14px] pr-[5px]">
          {Ico.search}
          {Ico.chat}
        </div>
      </div>
      <div className="border-b-2 border-[#8C8C8C]">
        <Toolbar2 />
      </div>
      <Chart />
      <ChartTabs />
      <Terminal />
    </div>
  );
}
